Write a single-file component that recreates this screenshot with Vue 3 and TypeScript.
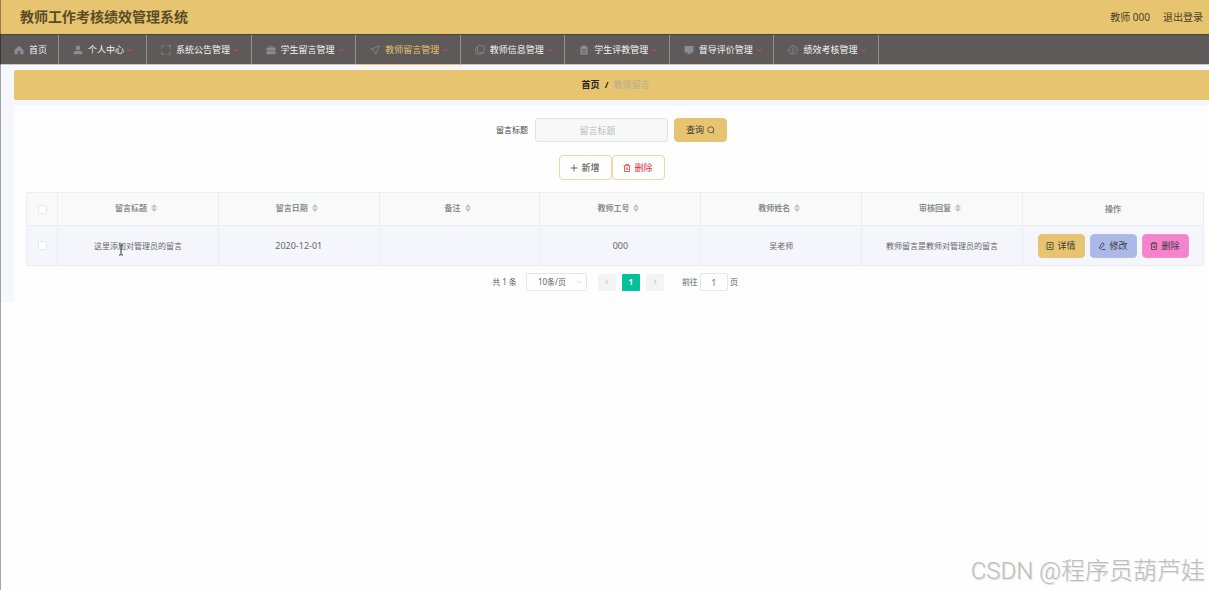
<script setup lang="ts">
import { ref } from 'vue'

type IconName = 'home' | 'user' | 'full' | 'case' | 'send' | 'copy' | 'clip' | 'monitor' | 'gauge'

interface MenuItem {
  label: string
  icon: IconName
  active?: boolean
}

const menu: MenuItem[] = [
  { label: '首页', icon: 'home' },
  { label: '个人中心', icon: 'user' },
  { label: '系统公告管理', icon: 'full' },
  { label: '学生留言管理', icon: 'case' },
  { label: '教师留言管理', icon: 'send', active: true },
  { label: '教师信息管理', icon: 'copy' },
  { label: '学生评教管理', icon: 'clip' },
  { label: '督导评价管理', icon: 'monitor' },
  { label: '绩效考核管理', icon: 'gauge' },
]

const columns: string[] = ['留言标题', '留言日期', '备注', '教师工号', '教师姓名', '审核回复']

interface Row {
  title: string
  date: string
  remark: string
  code: string
  name: string
  reply: string
}

const rows: Row[] = [
  {
    title: '这里添加对管理员的留言',
    date: '2020-12-01',
    remark: '',
    code: '000',
    name: '吴老师',
    reply: '教师留言是教师对管理员的留言',
  },
]

const keyword = ref('')
const pageSize = ref('10')
const jump = ref('1')
</script>

<template>
  <div class="page">
    <header class="top">
      <h1>教师工作考核绩效管理系统</h1>
      <div class="account">
        <span>教师 000</span>
        <a href="#">退出登录</a>
      </div>
    </header>

    <nav class="menu">
      <a v-for="m in menu" :key="m.label" href="#" class="menu-item" :class="{ active: m.active }">
        <svg class="menu-icon" viewBox="0 0 20 20" aria-hidden="true">
          <path v-if="m.icon === 'home'" class="solid" d="M10 1.5 1 10v8.5h6.5V12h5v6.5H19V10z" />
          <g v-else-if="m.icon === 'user'" class="solid">
            <circle cx="10" cy="6" r="4.8" />
            <path d="M1 18.5v-2.500c0-3 3-4 6-4h6c3 0 6 1 6 4v2.500z" />
          </g>
          <path v-else-if="m.icon === 'full'" class="line" d="M1.500 7V1.500H7M13 1.500h5.500V7M18.500 13v5.500H13M7 18.500H1.500V13" />
          <g v-else-if="m.icon === 'case'">
            <path class="line" d="M6.500 5V2.500h7V5" />
            <path class="solid" d="M1 5h18v6H1zM1 12.500h18v6H1z" />
          </g>
          <path v-else-if="m.icon === 'send'" class="line" d="M18.500 1.500 1.500 8.500l7 3 3 7z" />
          <g v-else-if="m.icon === 'copy'" class="line">
            <rect x="5" y="1.500" width="13.500" height="13.500" rx="2" />
            <path d="M5 5H3.500a2 2 0 0 0-2 2v9.500a2 2 0 0 0 2 2H13a2 2 0 0 0 2-2V15" />
          </g>
          <g v-else-if="m.icon === 'clip'">
            <path class="solid" fill-rule="evenodd" d="M3 3h3V1h8v2h3v16H3zM6 8v1.500h8V8zM6 11v1.500h8V11zM6 14v1.500h8V14z" />
          </g>
          <path v-else-if="m.icon === 'monitor'" class="solid" d="M1 2h18v13h-7v2h3v1.500H5V17h3v-2H1z" />
          <g v-else class="line">
            <circle cx="10" cy="10" r="8.500" />
            <path d="M10 5v9M6 8.500v2M14 8.500v2M8 14.500h4" />
          </g>
        </svg>
        <span class="menu-text">{{ m.label }}</span>
        <svg v-if="m.icon !== 'home'" class="chevron" viewBox="0 0 12 8" aria-hidden="true">
          <path d="M1 1.500 6 6.500l5-5" />
        </svg>
      </a>
    </nav>

    <main class="content">
      <div class="crumbs">
        <a href="#">首页</a><span class="slash">/</span><span class="here">教师留言</span>
      </div>

      <section class="panel">
        <form class="search" @submit.prevent>
          <label for="kw">留言标题</label>
          <input id="kw" v-model="keyword" type="text" placeholder="留言标题" />
          <button type="submit" class="btn gold">
            查询
            <svg class="ico" viewBox="0 0 16 16" aria-hidden="true"><circle cx="7.500" cy="7.500" r="6" /><path d="m11 12.500 3 2.500" /></svg>
          </button>
        </form>

        <div class="actions">
          <button type="button" class="btn outline">
            <svg class="ico" viewBox="0 0 16 16" aria-hidden="true"><path d="M8 1v14M1 8h14" /></svg>
            新增
          </button>
          <button type="button" class="btn outline danger">
            <svg class="ico" viewBox="0 0 16 16" aria-hidden="true"><path d="M1 3.500h14M5 3V1h6v2M3 4v11h10V4M6.500 7v5M9.500 7v5" /></svg>
            删除
          </button>
        </div>

        <table class="grid">
          <colgroup>
            <col class="c-check" />
            <col v-for="c in columns" :key="c" />
            <col class="c-ops" />
          </colgroup>
          <thead>
            <tr>
              <th><input type="checkbox" class="tick" aria-label="全选" /></th>
              <th v-for="c in columns" :key="c">
                <span class="sortable">
                  {{ c }}
                  <svg class="sort" viewBox="0 0 6 8" aria-hidden="true"><path d="M3 0 6 3.500H0zM3 8 0 4.500h6z" /></svg>
                </span>
              </th>
              <th>操作</th>
            </tr>
          </thead>
          <tbody>
            <tr v-for="r in rows" :key="r.title">
              <td><input type="checkbox" class="tick" aria-label="选择" /></td>
              <td>{{ r.title }}</td>
              <td class="num">{{ r.date }}</td>
              <td>{{ r.remark }}</td>
              <td class="num">{{ r.code }}</td>
              <td>{{ r.name }}</td>
              <td>{{ r.reply }}</td>
              <td>
                <div class="ops">
                  <button type="button" class="btn gold">
                    <svg class="ico" viewBox="0 0 16 16" aria-hidden="true"><path d="M2 1h12v14H2zM5 5h6M5 11h6M8 6.500v3" /></svg>
                    详情
                  </button>
                  <button type="button" class="btn blue">
                    <svg class="ico" viewBox="0 0 16 16" aria-hidden="true"><path d="M9 1.500 12.500 4l-6 8L3 13l.5-4zM7 15h8" /></svg>
                    修改
                  </button>
                  <button type="button" class="btn pink">
                    <svg class="ico" viewBox="0 0 16 16" aria-hidden="true"><path d="M1 3.500h14M5 3V1h6v2M3 4v11h10V4M6.500 7v5M9.500 7v5" /></svg>
                    删除
                  </button>
                </div>
              </td>
            </tr>
          </tbody>
        </table>

        <div class="pager">
          <span class="total">共 1 条</span>
          <span class="size">
            <select v-model="pageSize" aria-label="每页条数">
              <option value="10">10条/页</option>
              <option value="20">20条/页</option>
            </select>
            <svg class="size-arrow" viewBox="0 0 12 8" aria-hidden="true"><path d="M1 1.500 6 6.500l5-5" /></svg>
          </span>
          <button type="button" class="pg" disabled aria-label="上一页">
            <svg viewBox="0 0 8 12" aria-hidden="true"><path d="M6.500 1 1.500 6l5 5" /></svg>
          </button>
          <button type="button" class="pg current">1</button>
          <button type="button" class="pg" disabled aria-label="下一页">
            <svg viewBox="0 0 8 12" aria-hidden="true"><path d="m1.500 1 5 5-5 5" /></svg>
          </button>
          <label class="jump">前往<input v-model="jump" type="text" />页</label>
        </div>
      </section>
    </main>

    <svg class="caret" viewBox="0 0 6 12" aria-hidden="true"><path d="M1 1h1.500L3 1.500 3.500 1H5M3 1.500v9M1 11h1.500l.5-.5.5.5H5" /></svg>
    <div class="watermark">CSDN @程序员葫芦娃</div>
  </div>
</template>

<style>
body {
  margin: 0;
  background: #fefefe;
}
</style>

<style scoped>
.page {
  position: relative;
  min-height: 100vh;
  overflow: hidden;
  font-family: "Noto Sans", "Noto Sans CJK SC", sans-serif;
  font-size: 8px;
  line-height: 12px;
  color: #606266;
}
.page::after {
  content: "";
  position: absolute;
  left: 0;
  top: 0;
  bottom: 0;
  width: 1px;
  background: rgba(0, 0, 0, 0.35);
}
.page * {
  box-sizing: border-box;
}
a {
  color: inherit;
  text-decoration: none;
}
button,
input,
select {
  margin: 0;
  font: inherit;
  color: inherit;
}
svg path,
svg circle,
svg rect {
  fill: none;
  stroke: currentColor;
}

.top {
  display: flex;
  align-items: center;
  justify-content: space-between;
  height: 34px;
  padding: 0 6px 0 20px;
  background: #e7c46f;
  color: #5b4c28;
}
.top h1 {
  margin: 0;
  font-size: 14px;
  line-height: 20px;
  font-weight: 700;
}
.account {
  display: flex;
  gap: 13px;
  font-size: 10px;
  line-height: 14px;
  color: #4b4228;
}

.menu {
  display: grid;
  grid-template-columns: 59px 88px repeat(7, minmax(0, 1fr)) 330px;
  height: 31px;
  background: #5d5a59;
  border-top: 1px solid #4a463f;
  border-bottom: 1px solid #c9c8cb;
}
.menu-item {
  display: flex;
  align-items: center;
  padding-left: 14px;
  border-right: 1px solid #918f8e;
  font-size: 9px;
  color: #f4f4f4;
  white-space: nowrap;
}
.menu-icon {
  flex: none;
  width: 10px;
  height: 10px;
  margin-right: 5px;
  color: #8c8c94;
}
.menu-icon .solid,
.menu-icon .solid * {
  fill: currentColor;
  stroke: none;
}
.menu-icon .line,
.menu-icon .line * {
  stroke-width: 1.6;
}
.chevron {
  flex: none;
  width: 6px;
  height: 4px;
  margin-left: 3px;
  color: #c24a8c;
}
.chevron path {
  stroke-width: 2;
}
.menu-item.active {
  margin-bottom: -1px;
  border-bottom: 1px solid #e7c46f;
  color: #e7c46f;
}

.content {
  padding: 5px 0 0 14px;
  background: #f6f7fc;
}
.crumbs {
  display: flex;
  align-items: center;
  justify-content: center;
  height: 30px;
  padding-left: 8px;
  background: #e7c46f;
  border-radius: 2px 0 0 2px;
  font-size: 9px;
}
.crumbs a,
.slash {
  font-weight: 700;
  color: #2c2718;
}
.slash {
  margin: 0 5px;
}
.here {
  color: #b5ab95;
}

.panel {
  margin-top: 6px;
  padding: 12px 5px 11px 12px;
  background: #fefefe;
}
.search,
.actions {
  display: flex;
  align-items: center;
  justify-content: center;
  padding-right: 7px;
}
.search label {
  margin-right: 7px;
  color: #44464a;
}
.search input {
  width: 133px;
  height: 24px;
  margin-right: 6px;
  padding: 0 15px 0 7px;
  border: 1px solid #e2e4e8;
  border-radius: 3px;
  background: #f8f8f9;
  font-size: 9px;
  text-align: center;
  outline: none;
}
.search input::placeholder {
  color: #b9bbc2;
  opacity: 1;
}
.btn {
  display: inline-flex;
  align-items: center;
  justify-content: center;
  gap: 3px;
  width: 53px;
  height: 24px;
  padding: 0;
  border: 1px solid transparent;
  border-radius: 4px;
  font-size: 9px;
  line-height: 12px;
  white-space: nowrap;
  color: #3c3a36;
}
.ico {
  width: 8px;
  height: 8px;
}
.ico path,
.ico circle {
  stroke-width: 1.5;
}
.gold {
  background: #e7c46f;
  border-color: #e3c377;
}
.actions {
  margin: 13px 0 12px;
}
.outline {
  height: 25px;
  background: #fefefe;
  border-color: #ecd9a4;
}
.danger {
  color: #cf3540;
}

.grid {
  width: 100%;
  table-layout: fixed;
  border-collapse: separate;
  border-spacing: 0;
  border-top: 1px solid #ebeef5;
  border-left: 1px solid #ebeef5;
}
.c-check {
  width: 31px;
}
.c-ops {
  width: 181px;
}
.grid th,
.grid td {
  padding: 0;
  border-right: 1px solid #ecedf4;
  border-bottom: 1px solid #ebedf5;
  text-align: center;
  vertical-align: middle;
}
.grid th {
  height: 33px;
  background: #f9f9f9;
  font-weight: 700;
  color: #8b8d94;
}
.grid td {
  height: 40px;
  background: #f5f5fc;
  color: #64666b;
}
.grid .num {
  font-size: 9px;
}
.sortable {
  display: flex;
  align-items: center;
  justify-content: center;
  gap: 4px;
  padding: 0 4px 2px 0;
}
.sort {
  width: 6px;
  height: 8px;
  color: #bfc2ca;
}
.sort path {
  fill: currentColor;
  stroke: none;
}
.tick {
  display: block;
  appearance: none;
  width: 9px;
  height: 9px;
  margin: 0 auto;
  border: 1px solid #e6e8ee;
  border-radius: 2px;
  background: #fff;
}
.ops {
  display: flex;
  justify-content: center;
  gap: 5px;
}
.ops .btn {
  width: 47px;
}
.blue {
  background: #acb8e8;
  border-color: #b3bde8;
}
.pink {
  background: #f583cb;
  border-color: #f391cf;
}

.pager {
  display: flex;
  align-items: center;
  justify-content: center;
  height: 18px;
  margin-top: 7px;
}
.total {
  margin-right: 9px;
}
.size {
  position: relative;
  margin-right: 11px;
}
.size select {
  display: block;
  appearance: none;
  width: 61px;
  height: 18px;
  padding: 0 11px;
  border: 1px solid #e4e6eb;
  border-radius: 2px;
  background: #fefefe;
}
.size-arrow {
  position: absolute;
  right: 5px;
  top: 7px;
  width: 6px;
  height: 4px;
  color: #c0c4cc;
}
.pg {
  display: flex;
  align-items: center;
  justify-content: center;
  width: 18px;
  height: 17px;
  margin-right: 6px;
  padding: 0;
  border: 0;
  border-radius: 1px;
  background: #f4f4f5;
  color: #b4b8c0;
}
.pg svg {
  width: 4px;
  height: 6px;
}
.pg svg path {
  stroke-width: 1.8;
}
.pg.current {
  background: #05c199;
  color: #fff;
  font-weight: 700;
}
.jump {
  display: flex;
  align-items: center;
  margin-left: 12px;
}
.jump input {
  width: 28px;
  height: 18px;
  margin: 0 2px;
  padding: 0;
  border: 1px solid #e4e6eb;
  border-radius: 2px;
  background: #fefefe;
  text-align: center;
}

.caret {
  position: absolute;
  left: 118px;
  top: 244px;
  width: 6px;
  height: 12px;
  color: #333;
}
.watermark {
  position: absolute;
  right: 4px;
  bottom: 4px;
  font-family: Roboto, "Noto Sans CJK SC", sans-serif;
  font-size: 24px;
  line-height: 30px;
  font-weight: 300;
  color: #bebebe;
  text-shadow: 1px 1px 1px #dcdcdc;
  white-space: nowrap;
}
</style>
